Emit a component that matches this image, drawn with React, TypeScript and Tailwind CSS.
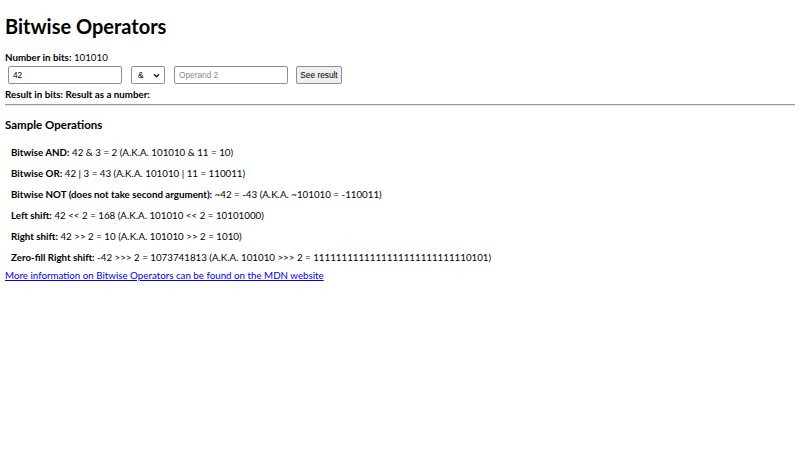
import React from "react";

const items: [string, string][] = [
  ["Bitwise AND:", " 42 & 3 = 2 (A.K.A. 101010 & 11 = 10)"],
  ["Bitwise OR:", " 42 | 3 = 43 (A.K.A. 101010 | 11 = 110011)"],
  ["Bitwise NOT (does not take second argument):", " ~42 = -43 (A.K.A. ~101010 = -110011)"],
  ["Left shift:", " 42 << 2 = 168 (A.K.A. 101010 << 2 = 10101000)"],
  ["Right shift:", " 42 >> 2 = 10 (A.K.A. 101010 >> 2 = 1010)"],
  ["Zero-fill Right shift:", " -42 >>> 2 = 1073741813 (A.K.A. 101010 >>> 2 = 1111111111111111111111111110101)"],
];

export default function App() {
  return (
    <div className="min-h-[450px] w-[800px] bg-white text-black font-['Lato',sans-serif] text-[9.75px] leading-[12px] px-[5px] pt-[14px]">
      <h1 className="text-[20px] leading-[24px] font-bold">Bitwise Operators</h1>
      <div className="mt-[13px] leading-[12px]">
        <span className="font-bold">Number in bits:</span> 101010
      </div>
      <div className="mt-[3px] flex items-center h-[18px] font-['Liberation_Sans',Arial,sans-serif] text-[8.3px]">
        <input
          defaultValue="42"
          className="ml-[3px] w-[114px] h-[18px] border border-[#8f8f8f] rounded-[2px] px-[4px] text-[8.3px] text-black outline-none"
        />
        <div className="ml-[9px] w-[34px] h-[18px] border border-[#8f8f8f] rounded-[2px] flex items-center justify-between pl-[6px] pr-[4px]">
          <span>&amp;</span>
          <svg width="7" height="5" viewBox="0 0 8 6">
            <path d="M1 1.5 L4 4.5 L7 1.5" stroke="#222" strokeWidth="1.8" fill="none" />
          </svg>
        </div>
        <input
          placeholder="Operand 2"
          className="ml-[9px] w-[114px] h-[18px] border border-[#8f8f8f] rounded-[2px] px-[4px] text-[8.3px] placeholder:text-[#8a8a8a] outline-none"
        />
        <button className="ml-[8px] w-[46px] h-[18px] border border-[#8f8f8f] rounded-[2px] bg-[#efefef] text-[8.3px] text-black flex items-center justify-center whitespace-nowrap px-0">
          See result
        </button>
      </div>
      <div className="mt-[4px] font-bold leading-[12px]">Result in bits: Result as a number:</div>
      <div className="mt-[4px] border-t border-[#9a9a9a] border-b border-b-[#e6e6e6] h-[2px]" />
      <h3 className="mt-[12px] text-[11.5px] leading-[14px] font-bold">Sample Operations</h3>
      <div className="mt-[14px] pl-[6px] flex flex-col gap-[9px]">
        {items.map(([b, t]) => (
          <div key={b} className="leading-[12px]">
            <span className="font-bold">{b}</span>
            {t}
          </div>
        ))}
      </div>
      <a href="#" className="block mt-[6px] text-[#0000ee] underline leading-[12px]">
        More information on Bitwise Operators can be found on the MDN website
      </a>
    </div>
  );
}
